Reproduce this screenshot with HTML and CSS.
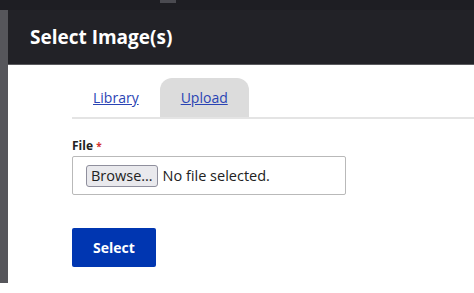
FILE: index.html
```html
<!DOCTYPE html>
<html lang="en">
<head>
    <meta charset="UTF-8">
    <meta name="viewport" content="width=device-width, initial-scale=1.0">
    <title>Select Image(s)</title>
    <link rel="stylesheet" href="styles.css">
</head>
<body>
    <div class="topbar">
        <span class="topbar-item"></span>
    </div>
    <div class="stage">
        <div class="backdrop"></div>
        <div class="dialog">
            <div class="dialog-title">Select Image(s)</div>
            <div class="dialog-body">
                <ul class="tabs">
                    <li class="tab"><a href="#">Library</a></li>
                    <li class="tab active"><a href="#">Upload</a></li>
                </ul>

                <form class="upload-form">
                    <label class="field-label" for="file">File <span class="required">*</span></label>
                    <div class="file-box">
                        <span class="browse">Browse…</span>
                        <span class="file-name">No file selected.</span>
                    </div>
                    <button type="button" class="btn-primary">Select</button>
                </form>
            </div>
        </div>
    </div>
</body>
</html>
```

FILE: styles.css
```css
* {
    box-sizing: border-box;
    margin: 0;
    padding: 0;
    font-family: 'Open Sans', sans-serif;
}

body {
    background: #1e1e23;
    width: 474px;
    height: 293px;
    overflow: hidden;
}

.topbar {
    height: 10px;
    position: relative;
}

.topbar-item {
    position: absolute;
    left: 160px;
    top: 0;
    width: 16px;
    height: 3px;
    background: #4a4a50;
}

.stage {
    display: flex;
    align-items: flex-start;
    height: 283px;
    background: white;
}

.backdrop {
    width: 8px;
    height: 273px;
    background: #56565b;
}

.dialog {
    flex: 1;
    align-self: stretch;
    background: white;
    display: flex;
    flex-direction: column;
}

.dialog-title {
    background: #222227;
    color: white;
    height: 55px;
    padding-left: 22px;
    font-size: 19px;
    font-weight: bold;
    display: flex;
    align-items: center;
    border-bottom: 1px solid #5a5a5e;
}

.dialog-body {
    padding: 13px 0 0 64px;
}

.tabs {
    list-style: none;
    display: flex;
    border-bottom: 2px solid #e4e4e4;
}

.tab {
    height: 39px;
    display: flex;
    align-items: center;
    padding: 0 21px;
    border-radius: 12px 12px 0 0;
}

.tab a {
    color: #2a44b4;
    font-size: 14px;
}

.tab.active {
    background: #dcdcdc;
}

.upload-form {
    padding-top: 18px;
}

.field-label {
    display: block;
    font-size: 12px;
    font-weight: bold;
    color: #222;
    margin-bottom: 2px;
}

.required {
    color: #d3312f;
    font-size: 10px;
}

.file-box {
    width: 274px;
    height: 39px;
    border: 1px solid #b9b9b9;
    border-radius: 2px;
    display: flex;
    align-items: center;
    padding-left: 13px;
    gap: 5px;
    font-size: 14.5px;
    color: #222;
}

.browse {
    background: #e9e9ed;
    border: 1px solid #8f8f9d;
    border-radius: 3px;
    height: 22px;
    padding: 0 4px;
    display: flex;
    align-items: center;
}

.btn-primary {
    margin-top: 33px;
    width: 84px;
    height: 39px;
    background: #0036b1;
    color: white;
    border: none;
    border-radius: 2px;
    font-size: 14px;
    font-weight: bold;
}
```
